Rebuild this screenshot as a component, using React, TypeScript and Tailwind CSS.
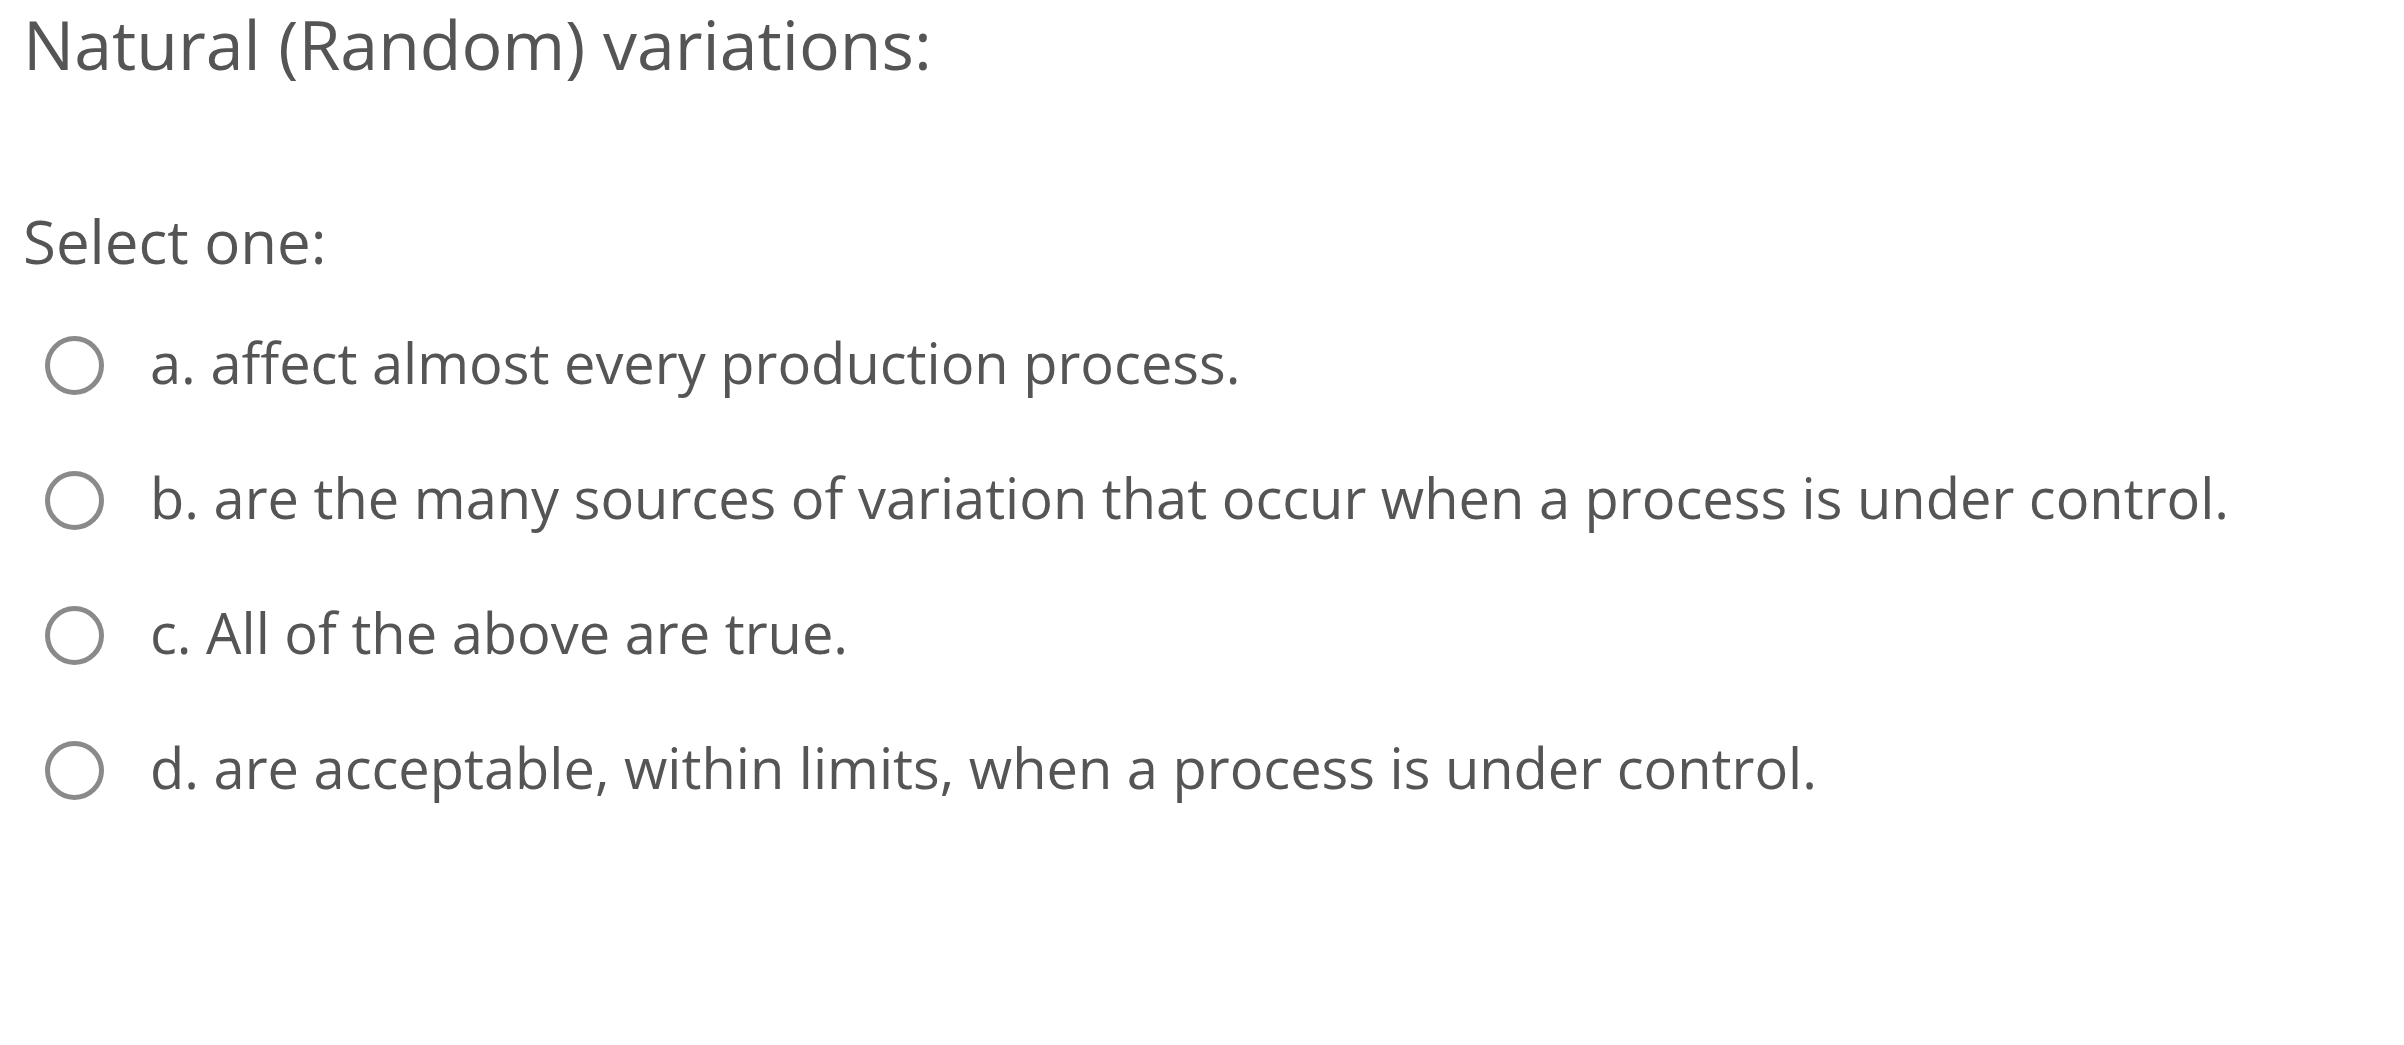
import React from "react";

const options = [
  "a. affect almost every production process.",
  "b. are the many sources of variation that occur when a process is under control.",
  "c. All of the above are true.",
  "d. are acceptable, within limits, when a process is under control.",
];

export default function App() {
  return (
    <div
      className="min-h-screen w-full bg-white pl-[23px] pt-[4px] text-[#555555]"
      style={{ fontFamily: '"Open Sans", sans-serif' }}
    >
      <div className="text-[68px] leading-[80px] whitespace-nowrap">Natural (Random) variations:</div>
      <div className="mt-[117px] text-[60px] leading-[80px] whitespace-nowrap">Select one:</div>
      <div className="mt-[14px] flex flex-col">
        {options.map((o) => (
          <div key={o} className="flex items-start h-[135px]">
            <div className="ml-[22px] mt-[41px] h-[59px] w-[59px] shrink-0 rounded-full border-[5px] border-[#8a8a8a] bg-white" />
            <div className="ml-[46px] text-[56px] leading-[135px] whitespace-nowrap">{o}</div>
          </div>
        ))}
      </div>
    </div>
  );
}
